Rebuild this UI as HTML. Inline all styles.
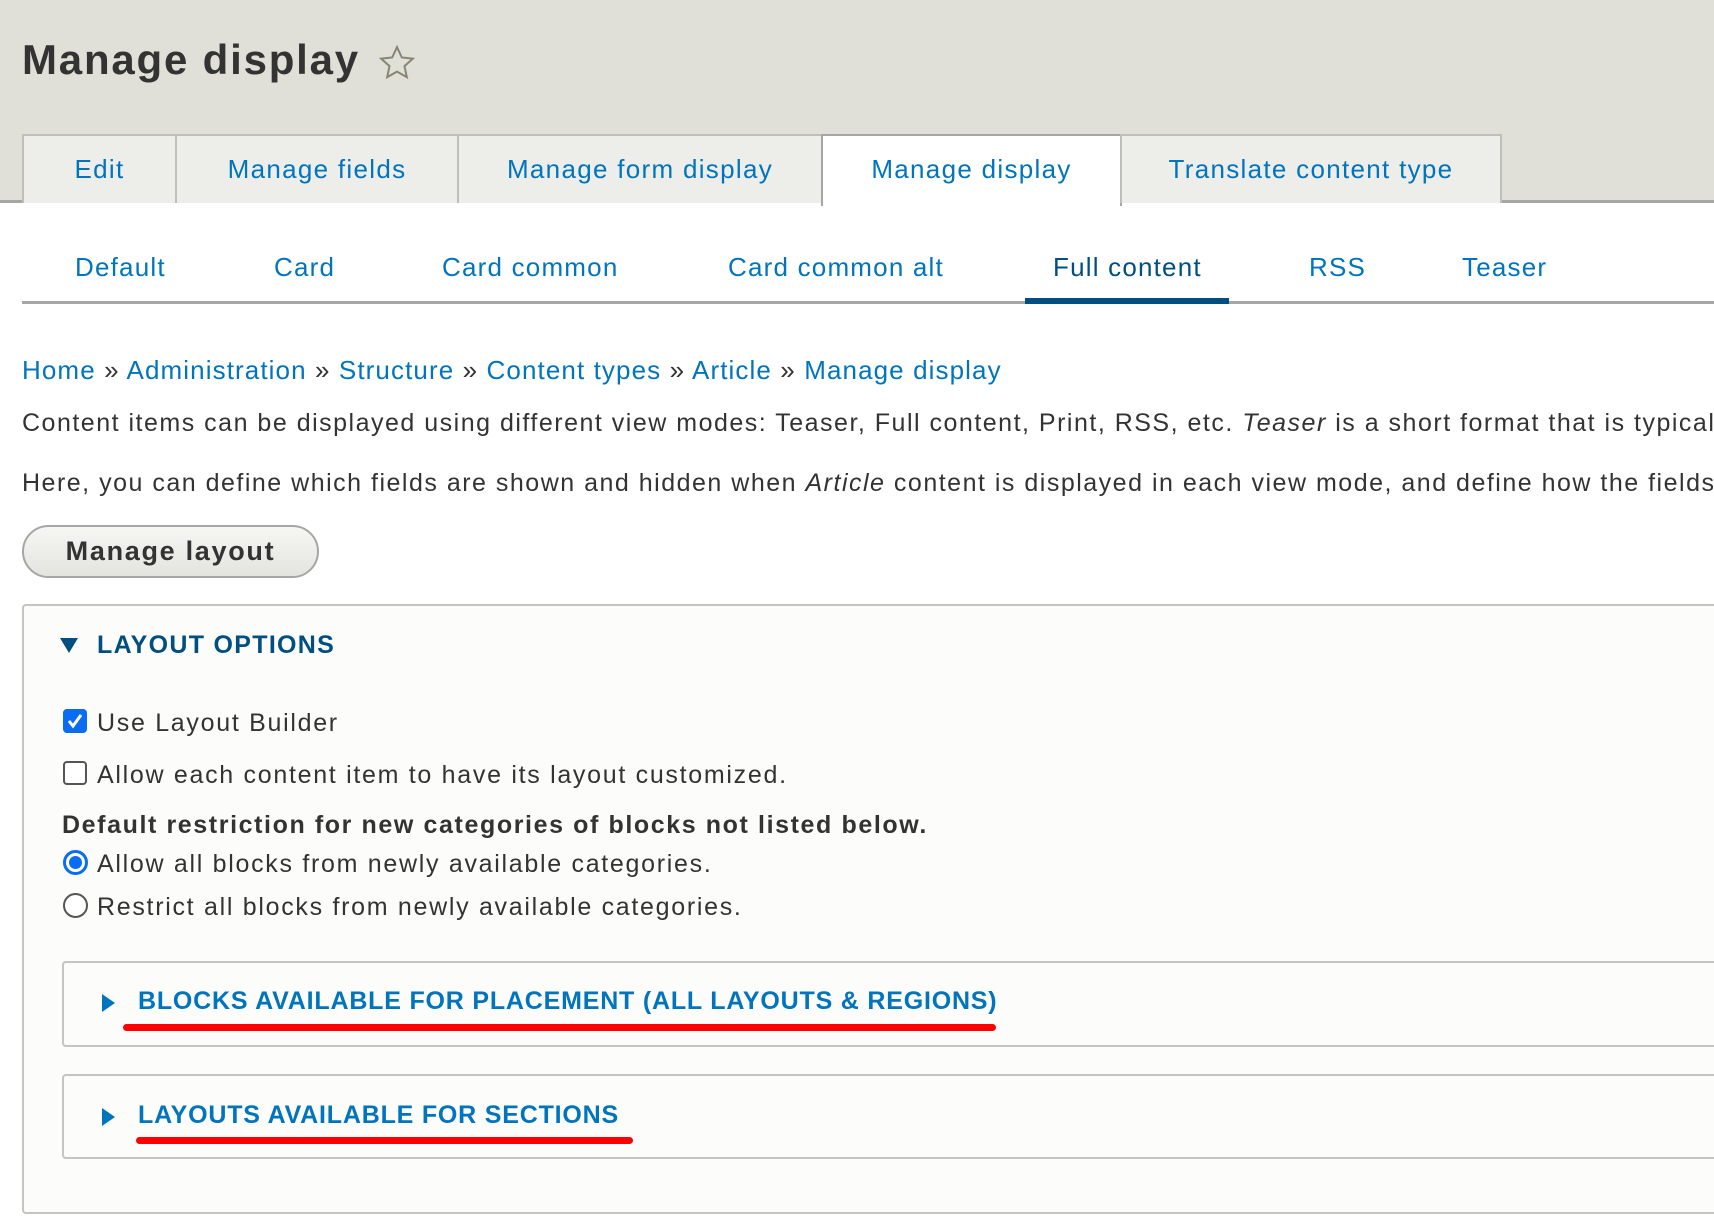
<!DOCTYPE html>
<html><head><meta charset="utf-8"><style>
*{margin:0;padding:0;box-sizing:border-box}
html,body{width:1714px;height:1230px;overflow:hidden}
body{background:#fff;font-family:"Liberation Sans",sans-serif;color:#333;position:relative}
#w{position:absolute;left:0;top:0;width:1714px;height:1230px;overflow:hidden}
.a{position:absolute;white-space:nowrap}
.hdr{position:absolute;left:0;top:0;width:1714px;height:203px;background:#e0e0d8;border-bottom:3px solid #a6a6a6}
.tab{position:absolute;top:134px;height:69px;background:#ededea;border:2px solid #bfbfba;border-bottom:none;color:#0074bd;font-size:26px;letter-spacing:1.3px;text-align:center;line-height:66px}
.link{color:#0074bd}
.st{position:absolute;top:252px;font-size:26px;letter-spacing:1.2px;color:#0074bd}
p.a{font-size:25px;letter-spacing:1.5px}
.fs{position:absolute;left:22px;top:604px;width:1720px;height:610px;background:#fcfcfa;border:2px solid #c4c4c0;border-radius:4px}
.box{position:absolute;left:62px;width:1680px;background:#fcfcfa;border:2px solid #c4c4c0;border-radius:4px}
.red{position:absolute;height:7px;background:#f00;border-radius:4px}
.cb{position:absolute;left:63px;width:24px;height:24px;border:2px solid #555;border-radius:4px;background:#fff}
.lb{letter-spacing:1.7px;font-size:25px}
</style></head><body><div id="w">
<div class="hdr"></div>
<div class="a" style="left:22px;top:36px;font-size:42px;letter-spacing:1.8px;font-weight:bold;color:#333">Manage display</div>
<svg class="a" style="left:377px;top:43px" width="40" height="40" viewBox="0 0 24 24"><path d="M12 2.5l2.9 6.2 6.6.7-5 4.5 1.4 6.6L12 17.2 6.1 20.5l1.4-6.6-5-4.5 6.6-.7z" fill="none" stroke="#868672" stroke-width="1.2"/></svg>
<div class="tab" style="left:22px;width:155px">Edit</div>
<div class="tab" style="left:175px;width:284px">Manage fields</div>
<div class="tab" style="left:457px;width:366px">Manage form display</div>
<div class="tab" style="left:821px;width:301px;background:#fff;height:72px;border-color:#a6a6a6">Manage display</div>
<div class="tab" style="left:1120px;width:382px">Translate content type</div>
<div class="st" style="left:75px">Default</div>
<div class="st" style="left:274px">Card</div>
<div class="st" style="left:442px">Card common</div>
<div class="st" style="left:728px">Card common alt</div>
<div class="st" style="left:1053px;color:#004f80">Full content</div>
<div class="st" style="left:1309px">RSS</div>
<div class="st" style="left:1462px">Teaser</div>
<div class="a" style="left:22px;top:301px;width:1692px;height:3px;background:#a6a6a6"></div>
<div class="a" style="left:1025px;top:298px;width:204px;height:6px;background:#004f80"></div>
<div class="a" style="left:22px;top:355px;font-size:26px;letter-spacing:1.1px;color:#333"><span class="link">Home</span> » <span class="link">Administration</span> » <span class="link">Structure</span> » <span class="link">Content types</span> » <span class="link">Article</span> » <span class="link">Manage display</span></div>
<p class="a" style="left:22px;top:409px">Content items can be displayed using different view modes: Teaser, Full content, Print, RSS, etc. <i>Teaser</i> is a short format that is typically used in lists.</p>
<p class="a" style="left:22px;top:469px">Here, you can define which fields are shown and hidden when <i>Article</i> content is displayed in each view mode, and define how the fields are displayed.</p>
<div class="a" style="left:22px;top:525px;width:297px;height:53px;border:2px solid #a6a6a6;border-radius:27px;background:linear-gradient(#f6f6f3,#e4e4df);font-size:27px;letter-spacing:1.7px;font-weight:bold;color:#333;text-align:center;line-height:49px">Manage layout</div>
<div class="fs"></div>
<svg class="a" style="left:60px;top:638px" width="18" height="16"><path d="M0 0h18L9 15z" fill="#004f80"/></svg>
<div class="a" style="left:97px;top:631px;font-size:25px;letter-spacing:1.3px;font-weight:bold;color:#004f80">LAYOUT OPTIONS</div>
<div class="cb" style="top:709px;background:#0a6cf0;border-color:#0a6cf0"><svg width="20" height="20" style="position:absolute;left:0;top:0"><path d="M4 10l4 5 8-11" fill="none" stroke="#fff" stroke-width="3"/></svg></div>
<div class="a lb" style="left:97px;top:709px">Use Layout Builder</div>
<div class="cb" style="top:761px"></div>
<div class="a lb" style="left:97px;top:761px">Allow each content item to have its layout customized.</div>
<div class="a lb" style="left:62px;top:811px;font-weight:bold;letter-spacing:1.6px">Default restriction for new categories of blocks not listed below.</div>
<div class="a" style="left:63px;top:850px;width:25px;height:25px;border-radius:50%;border:3px solid #0a6cf0;background:#fff"><div style="position:absolute;left:3px;top:3px;width:13px;height:13px;border-radius:50%;background:#0a6cf0"></div></div>
<div class="a lb" style="left:97px;top:850px">Allow all blocks from newly available categories.</div>
<div class="a" style="left:63px;top:893px;width:25px;height:25px;border-radius:50%;border:2px solid #555;background:#fff"></div>
<div class="a lb" style="left:97px;top:893px">Restrict all blocks from newly available categories.</div>
<div class="box" style="top:961px;height:86px"></div>
<svg class="a" style="left:102px;top:994px" width="14" height="18"><path d="M0 0l13 9L0 18z" fill="#0074bd"/></svg>
<div class="a" style="left:138px;top:987px;font-size:25px;letter-spacing:0.8px;font-weight:bold;color:#0074bd">BLOCKS AVAILABLE FOR PLACEMENT (ALL LAYOUTS &amp; REGIONS)</div>
<div class="red" style="left:123px;top:1024px;width:873px"></div>
<div class="box" style="top:1074px;height:85px"></div>
<svg class="a" style="left:102px;top:1108px" width="14" height="18"><path d="M0 0l13 9L0 18z" fill="#0074bd"/></svg>
<div class="a" style="left:138px;top:1101px;font-size:25px;letter-spacing:0.8px;font-weight:bold;color:#0074bd">LAYOUTS AVAILABLE FOR SECTIONS</div>
<div class="red" style="left:136px;top:1137px;width:497px"></div>
</div></body></html>
